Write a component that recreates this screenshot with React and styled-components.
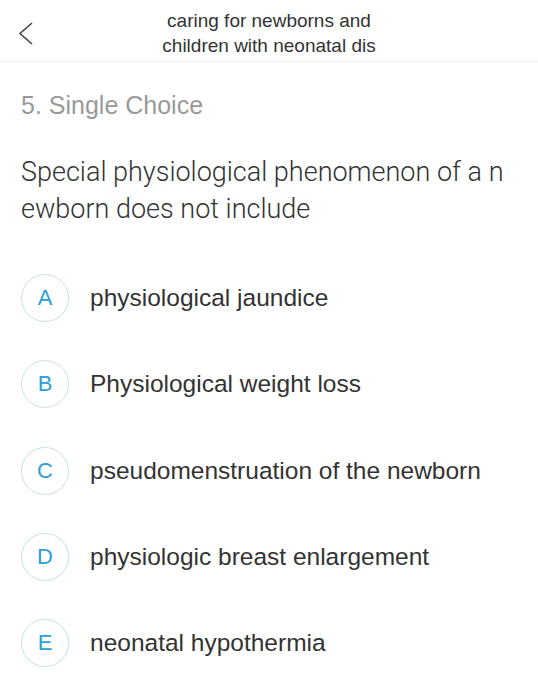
import React from "react";
import styled, { createGlobalStyle } from "styled-components";

const Global = createGlobalStyle`
  html, body { margin: 0; padding: 0; background: #fff; }
  body { font-family: "Liberation Sans", Arial, sans-serif; -webkit-font-smoothing: antialiased; }
`;

const Page = styled.div`
  width: 538px;
  min-height: 700px;
  background: #fff;
`;

const Header = styled.header`
  height: 61px;
  border-bottom: 1px solid #f1f1f1;
  display: flex;
  align-items: center;
  justify-content: center;
  position: relative;
`;

const Back = styled.button`
  position: absolute;
  left: 18px;
  top: 20px;
  width: 16px;
  height: 26px;
  padding: 0;
  border: none;
  background: none;
  display: flex;
`;

const Title = styled.h1`
  margin: 5px 0 0 0;
  width: 225px;
  text-align: center;
  font-size: 19px;
  font-weight: 400;
  line-height: 25px;
  color: #333;
`;

const Body = styled.main`
  padding: 28px 21px 0 21px;
`;

const TypeLabel = styled.div`
  font-size: 25px;
  line-height: 30px;
  color: #999;
`;

const Question = styled.p`
  margin: 34px 0 0 0;
  padding-right: 8px;
  font-family: Roboto, "Liberation Sans", sans-serif;
  font-weight: 300;
  font-size: 27px;
  line-height: 37px;
  color: #333;
  word-break: break-all;
`;

const Options = styled.ul`
  list-style: none;
  margin: 46px 0 0 0;
  padding: 0;
  display: flex;
  flex-direction: column;
  gap: 38.3px;
`;

const Option = styled.li`
  display: flex;
  align-items: center;
  gap: 21px;
`;

const Badge = styled.span`
  flex: none;
  width: 46px;
  height: 46px;
  border-radius: 50%;
  border: 1px solid #c9dfe8;
  display: flex;
  align-items: center;
  justify-content: center;
  font-size: 22px;
  color: #2c9fd8;
`;

const OptionText = styled.span`
  font-size: 24.5px;
  color: #333;
`;

const options = [
  ["A", "physiological jaundice"],
  ["B", "Physiological weight loss"],
  ["C", "pseudomenstruation of the newborn"],
  ["D", "physiologic breast enlargement"],
  ["E", "neonatal hypothermia"],
];

export default function App() {
  return (
    <Page>
      <Global />
      <Header>
        <Back aria-label="back">
          <svg width="16" height="26" viewBox="0 0 16 26">
            <path d="M14 3 L2 13.5 L14 24" fill="none" stroke="#444" strokeWidth="1.6" />
          </svg>
        </Back>
        <Title>caring for newborns and children with neonatal dis</Title>
      </Header>
      <Body>
        <TypeLabel>5. Single Choice</TypeLabel>
        <Question>Special physiological phenomenon of a newborn does not include</Question>
        <Options>
          {options.map(([k, t]) => (
            <Option key={k}>
              <Badge>{k}</Badge>
              <OptionText>{t}</OptionText>
            </Option>
          ))}
        </Options>
      </Body>
    </Page>
  );
}
